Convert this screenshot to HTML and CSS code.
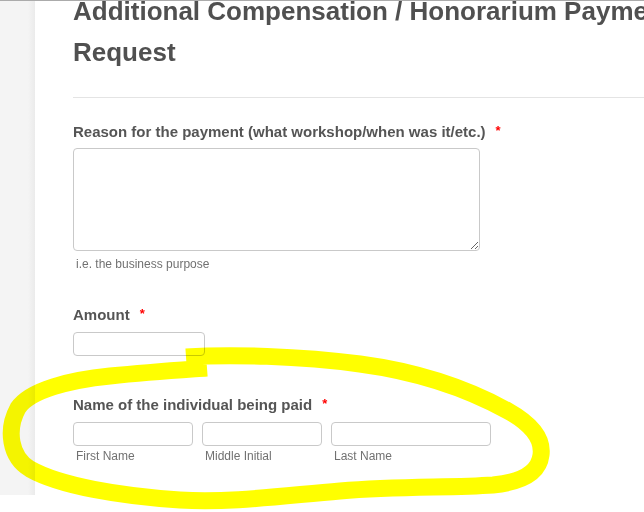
FILE: index.html
```html
<!DOCTYPE html>
<html lang="en">
<head>
<meta charset="utf-8">
<title>Additional Compensation / Honorarium Payment Request</title>
<link rel="stylesheet" href="styles.css">
</head>
<body>
<div class="page">
  <div class="side"></div>
  <main class="card">
    <h1 class="title">Additional Compensation / Honorarium Payment Request</h1>
    <form class="form">
      <div class="field field-reason">
        <label class="label">Reason for the payment (what workshop/when was it/etc.)<span class="req">*</span></label>
        <textarea class="textarea"></textarea>
        <div class="help">i.e. the business purpose</div>
      </div>
      <div class="field field-amount">
        <label class="label">Amount<span class="req">*</span></label>
        <input class="input input-amount" type="text">
      </div>
      <div class="field field-name">
        <label class="label">Name of the individual being paid<span class="req">*</span></label>
        <div class="name-row">
          <div class="name-part">
            <input class="input input-first" type="text">
            <span class="sub">First Name</span>
          </div>
          <div class="name-part">
            <input class="input input-middle" type="text">
            <span class="sub">Middle Initial</span>
          </div>
          <div class="name-part">
            <input class="input input-last" type="text">
            <span class="sub">Last Name</span>
          </div>
        </div>
      </div>
    </form>
  </main>
</div>
<svg class="scribble" width="644" height="512" viewBox="0 0 644 512" aria-hidden="true">
  <path d="M186,357 C230,354 300,356 360,364 C420,372 470,390 508,411 C533,425 543,440 541,455 C539,472 523,482 493,485 C450,488 400,486 340,491 C280,496 230,503 180,500 C120,496 60,486 30,469 C10,457 6,430 18,408 C30,390 70,380 110,376 C150,372 180,370 207,368" fill="none" stroke="#ffff00" stroke-width="17" stroke-linejoin="round"/>
</svg>
</body>
</html>
```

FILE: styles.css
```css
html, body {
  margin: 0;
  padding: 0;
}
body {
  width: 644px;
  height: 512px;
  overflow: hidden;
  background: #ffffff;
  border-top: 1px solid #ababab;
  box-sizing: border-box;
  font-family: "Liberation Sans", Arial, sans-serif;
  color: #555555;
  position: relative;
}
.page {
  display: flex;
  height: 494px;
}
.side {
  flex: 0 0 35px;
  background: linear-gradient(to right, #f4f4f4 0, #f4f4f4 28px, #ebebeb 35px);
}
.card {
  flex: 0 0 auto;
  width: 700px;
  background: #ffffff;
  padding-left: 38px;
  box-sizing: border-box;
}
.title {
  margin: -10px 0 0 0;
  width: 640px;
  font-size: 26px;
  line-height: 41px;
  font-weight: bold;
  color: #505050;
  padding-bottom: 24px;
  border-bottom: 1px solid #e4e4e4;
}
.form {
  display: flex;
  flex-direction: column;
}
.field {
  display: flex;
  flex-direction: column;
  align-items: flex-start;
}
.label {
  font-size: 15px;
  line-height: 20px;
  font-weight: bold;
  color: #555555;
}
.req {
  color: #ff0000;
  font-size: 13px;
  margin-left: 10px;
  position: relative;
  top: -2px;
}
.field-reason {
  margin-top: 24px;
}
.textarea {
  margin-top: 5px;
  width: 407px;
  height: 103px;
  box-sizing: border-box;
  border: 1px solid #c9c9c9;
  border-radius: 4px;
  resize: both;
  font-family: inherit;
  background: #ffffff;
}
.help {
  margin-top: 5px;
  padding-left: 3px;
  font-size: 12px;
  line-height: 16px;
  color: #717171;
}
.field-amount {
  margin-top: 33px;
}
.input {
  box-sizing: border-box;
  height: 24px;
  border: 1px solid #c9c9c9;
  border-radius: 4px;
  background: #ffffff;
  padding: 0 4px;
  font-family: inherit;
}
.input-amount {
  margin-top: 6px;
  width: 132px;
}
.field-name {
  margin-top: 39px;
}
.name-row {
  margin-top: 6px;
  display: flex;
  gap: 9px;
}
.name-part {
  display: flex;
  flex-direction: column;
}
.input-first, .input-middle {
  width: 120px;
}
.input-last {
  width: 160px;
}
.sub {
  margin-top: 2px;
  padding-left: 3px;
  font-size: 12px;
  line-height: 16px;
  color: #717171;
}
.scribble {
  position: absolute;
  left: 0;
  top: -1px;
  pointer-events: none;
  mix-blend-mode: multiply;
}
```
